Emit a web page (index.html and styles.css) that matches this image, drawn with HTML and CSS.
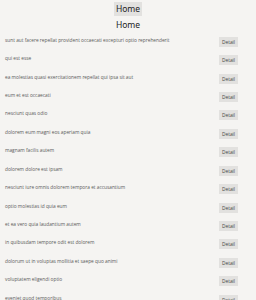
FILE: index.html
```html
<!DOCTYPE html>
<html lang="en">
<head>
    <meta charset="UTF-8" />
    <meta name="viewport" content="width=device-width, initial-scale=1.0" />
    <title>Home</title>
    <link rel="stylesheet" href="styles.css">
</head>
<body>
    <div class="top">
        <button class="home-btn">Home</button>
    </div>
    <h1 class="title">Home</h1>
    <ul class="list">
        <li class="row"><span>sunt aut facere repellat provident occaecati excepturi optio reprehenderit</span><button class="detail">Detail</button></li>
        <li class="row"><span>qui est esse</span><button class="detail">Detail</button></li>
        <li class="row"><span>ea molestias quasi exercitationem repellat qui ipsa sit aut</span><button class="detail">Detail</button></li>
        <li class="row"><span>eum et est occaecati</span><button class="detail">Detail</button></li>
        <li class="row"><span>nesciunt quas odio</span><button class="detail">Detail</button></li>
        <li class="row"><span>dolorem eum magni eos aperiam quia</span><button class="detail">Detail</button></li>
        <li class="row"><span>magnam facilis autem</span><button class="detail">Detail</button></li>
        <li class="row"><span>dolorem dolore est ipsam</span><button class="detail">Detail</button></li>
        <li class="row"><span>nesciunt iure omnis dolorem tempora et accusantium</span><button class="detail">Detail</button></li>
        <li class="row"><span>optio molestias id quia eum</span><button class="detail">Detail</button></li>
        <li class="row"><span>et ea vero quia laudantium autem</span><button class="detail">Detail</button></li>
        <li class="row"><span>in quibusdam tempore odit est dolorem</span><button class="detail">Detail</button></li>
        <li class="row"><span>dolorum ut in voluptas mollitia et saepe quo animi</span><button class="detail">Detail</button></li>
        <li class="row"><span>voluptatem eligendi optio</span><button class="detail">Detail</button></li>
        <li class="row"><span>eveniet quod temporibus</span><button class="detail">Detail</button></li>
    </ul>
</body>
</html>
```

FILE: styles.css
```css
html, body {
    margin: 0;
    padding: 0;
}
body {
    background: #f5f4f2;
    color: #5a5a5a;
    font-family: "Open Sans", sans-serif;
    overflow: hidden;
}
.top {
    display: flex;
    justify-content: center;
    padding-top: 2px;
}
.home-btn {
    font-family: "Noto Sans", sans-serif;
    font-size: 8.5px;
    line-height: 12px;
    padding: 1px 2px;
    border: none;
    background: #e2e1df;
    color: #222;
}
.title {
    margin: 3px 0 0;
    text-align: center;
    font-family: "Noto Sans", sans-serif;
    font-weight: normal;
    font-size: 8.5px;
    line-height: 12px;
    color: #222;
}
.list {
    list-style: none;
    margin: 0;
    padding: 0 18px 0 5px;
}
.row {
    display: flex;
    justify-content: space-between;
    align-items: center;
    height: 18.43px;
    font-size: 4.8px;
    line-height: 7px;
}
.detail {
    font-family: "Open Sans", sans-serif;
    font-size: 4.8px;
    line-height: 6px;
    padding: 2px 3px;
    margin-top: 3px;
    border: none;
    background: #e2e1df;
    color: #444;
}
```
